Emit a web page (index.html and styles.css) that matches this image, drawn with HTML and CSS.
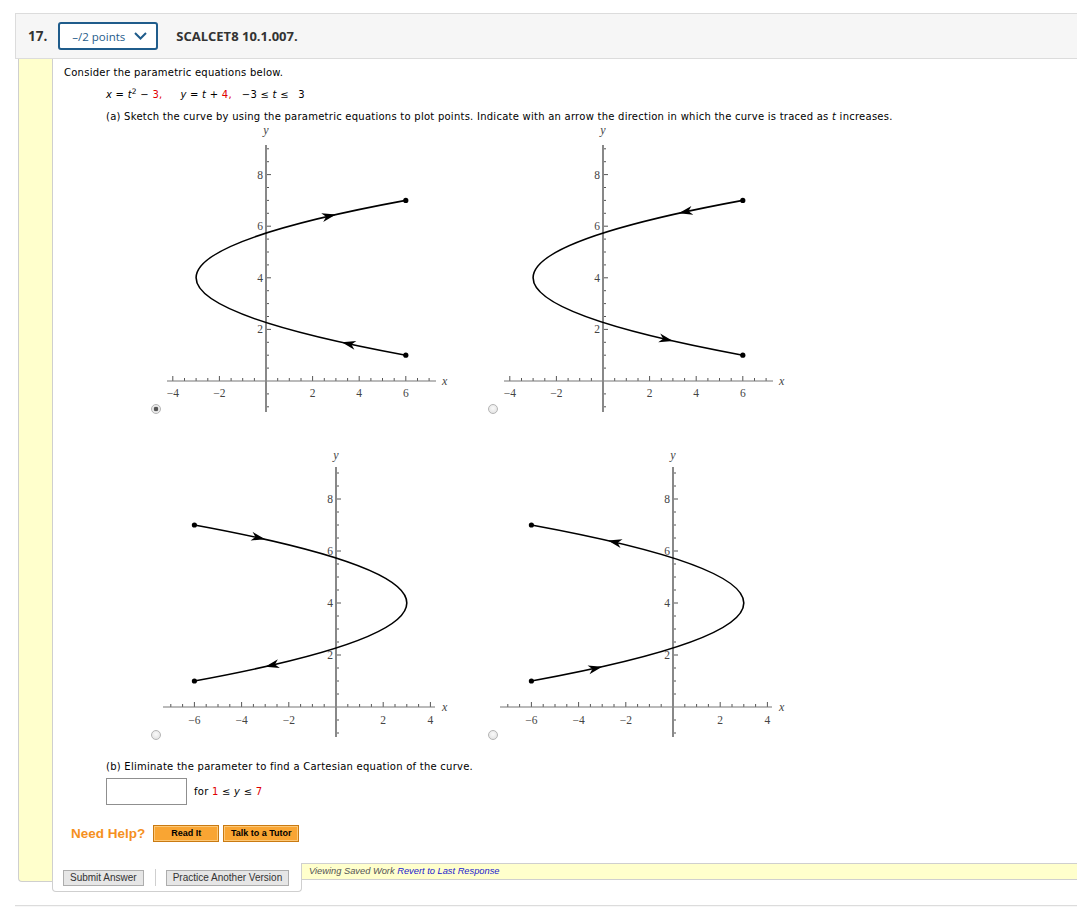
FILE: index.html
```html
<!DOCTYPE html>
<html>
<head>
<meta charset="utf-8">
<link rel="stylesheet" href="styles.css">
</head>
<body>
<div class="page">
  <div class="q">
    <div class="qhead">
      <span class="qnum">17.</span>
      <span class="pts">–/2 points <svg class="chev" width="13" height="8" viewBox="0 0 13 8"><path d="M1 1L6.5 6.5L12 1"/></svg></span>
      <span class="qtitle">SCALCET8 10.1.007.</span>
    </div>
    <div class="qbody">
      <div class="stripe"></div>
      <div class="content">
        <p class="line">Consider the parametric equations below.</p>
        <p class="line eq ind"><i>x</i> = <i>t</i><sup>2</sup> − <span class="red">3,</span><span class="sp1"></span><i>y</i> = <i>t</i> + <span class="red">4,</span><span class="sp2"></span>−3 ≤ <i>t</i> ≤ <span class="sp3"></span>3</p>
        <p class="line parta ind">(a) Sketch the curve by using the parametric equations to plot points. Indicate with an arrow the direction in which the curve is traced as <i>t</i> increases.</p>

        <div class="graphs">
          <div class="cell">
            <svg class="plot" width="300" height="279" viewBox="0 0 300 279">
              <path class="tk" d="M22.8 256v-5M69.4 256v-5M162.6 256v-5M209.2 256v-5M255.8 256v-5M34.5 256v-3M46.1 256v-3M57.8 256v-3M81.1 256v-3M92.7 256v-3M104.4 256v-3M127.7 256v-3M139.3 256v-3M151 256v-3M174.3 256v-3M185.9 256v-3M197.6 256v-3M220.9 256v-3M232.5 256v-3M244.2 256v-3M267.5 256v-3M279.1 256v-3M116 204.4h5M116 152.8h5M116 101.2h5M116 49.6h5M116 281.8h3M116 268.9h3M116 243.1h3M116 230.2h3M116 217.3h3M116 191.5h3M116 178.6h3M116 165.7h3M116 139.9h3M116 127h3M116 114.1h3M116 88.3h3M116 75.4h3M116 62.5h3M116 36.7h3M116 23.8h3"/>
              <path class="ax" d="M17 256H286"/>
              <path class="ay" d="M116 20V287"/>
              <path class="crv" d="M255.8 230.2Q-163.6 152.8 255.8 75.4"/>
              <circle class="dot" cx="255.8" cy="230.2" r="2.6"/>
              <circle class="dot" cx="255.8" cy="75.4" r="2.6"/>
              <polygon class="arr" points="0,0 -14,-4.5 -10,0 -14,4.5" transform="translate(185.9 89.6) rotate(-12.7)"/>
              <polygon class="arr" points="0,0 -14,-4.5 -10,0 -14,4.5" transform="translate(191.7 217.3) rotate(-167.5)"/>
              <g class="tl">
                <text x="22.8" y="272">−4</text><text x="69.4" y="272">−2</text><text x="162.6" y="272">2</text><text x="209.2" y="272">4</text><text x="255.8" y="272">6</text>
              </g>
              <g class="tly">
                <text x="113" y="208.4">2</text><text x="113" y="156.8">4</text><text x="113" y="105.2">6</text><text x="113" y="53.6">8</text>
              </g>
              <text class="al" x="292" y="259.5">x</text>
              <text class="al mid" x="116" y="9">y</text>
            </svg>
            <span class="radio on"></span>
          </div>
          <div class="cell">
            <svg class="plot" width="300" height="279" viewBox="0 0 300 279">
              <path class="tk" d="M22.8 256v-5M69.4 256v-5M162.6 256v-5M209.2 256v-5M255.8 256v-5M34.5 256v-3M46.1 256v-3M57.8 256v-3M81.1 256v-3M92.7 256v-3M104.4 256v-3M127.7 256v-3M139.3 256v-3M151 256v-3M174.3 256v-3M185.9 256v-3M197.6 256v-3M220.9 256v-3M232.5 256v-3M244.2 256v-3M267.5 256v-3M279.1 256v-3M116 204.4h5M116 152.8h5M116 101.2h5M116 49.6h5M116 281.8h3M116 268.9h3M116 243.1h3M116 230.2h3M116 217.3h3M116 191.5h3M116 178.6h3M116 165.7h3M116 139.9h3M116 127h3M116 114.1h3M116 88.3h3M116 75.4h3M116 62.5h3M116 36.7h3M116 23.8h3"/>
              <path class="ax" d="M17 256H286"/>
              <path class="ay" d="M116 20V287"/>
              <path class="crv" d="M255.8 230.2Q-163.6 152.8 255.8 75.4"/>
              <circle class="dot" cx="255.8" cy="230.2" r="2.6"/>
              <circle class="dot" cx="255.8" cy="75.4" r="2.6"/>
              <polygon class="arr" points="0,0 -14,-4.5 -10,0 -14,4.5" transform="translate(191.7 88.3) rotate(167.5)"/>
              <polygon class="arr" points="0,0 -14,-4.5 -10,0 -14,4.5" transform="translate(185.9 216) rotate(12.7)"/>
              <g class="tl">
                <text x="22.8" y="272">−4</text><text x="69.4" y="272">−2</text><text x="162.6" y="272">2</text><text x="209.2" y="272">4</text><text x="255.8" y="272">6</text>
              </g>
              <g class="tly">
                <text x="113" y="208.4">2</text><text x="113" y="156.8">4</text><text x="113" y="105.2">6</text><text x="113" y="53.6">8</text>
              </g>
              <text class="al" x="292" y="259.5">x</text>
              <text class="al mid" x="116" y="9">y</text>
            </svg>
            <span class="radio"></span>
          </div>
          <div class="cell">
            <svg class="plot" width="300" height="279" viewBox="0 0 300 279">
              <path class="tk" d="M44.4 256v-5M91.6 256v-5M138.8 256v-5M233.2 256v-5M280.4 256v-5M20.8 256v-3M32.6 256v-3M56.2 256v-3M68 256v-3M79.8 256v-3M103.4 256v-3M115.2 256v-3M127 256v-3M150.6 256v-3M162.4 256v-3M174.2 256v-3M197.8 256v-3M209.6 256v-3M221.4 256v-3M245 256v-3M256.8 256v-3M268.6 256v-3M186 204h5M186 152h5M186 100h5M186 48h5M186 282h3M186 269h3M186 243h3M186 230h3M186 217h3M186 191h3M186 178h3M186 165h3M186 139h3M186 126h3M186 113h3M186 87h3M186 74h3M186 61h3M186 35h3M186 22h3"/>
              <path class="ax" d="M13 256H285"/>
              <path class="ay" d="M186 16V286"/>
              <path class="crv" d="M44.4 230Q469.2 152 44.4 74"/>
              <circle class="dot" cx="44.4" cy="230" r="2.6"/>
              <circle class="dot" cx="44.4" cy="74" r="2.6"/>
              <polygon class="arr" points="0,0 -14,-4.5 -10,0 -14,4.5" transform="translate(115.2 88.3) rotate(12.7)"/>
              <polygon class="arr" points="0,0 -14,-4.5 -10,0 -14,4.5" transform="translate(115.2 215.7) rotate(167.3)"/>
              <g class="tl">
                <text x="44.4" y="273">−6</text><text x="91.6" y="273">−4</text><text x="138.8" y="273">−2</text><text x="233.2" y="273">2</text><text x="280.4" y="273">4</text>
              </g>
              <g class="tly">
                <text x="183" y="208">2</text><text x="183" y="156">4</text><text x="183" y="104">6</text><text x="183" y="52">8</text>
              </g>
              <text class="al" x="292" y="260">x</text>
              <text class="al mid" x="186" y="8">y</text>
            </svg>
            <span class="radio"></span>
          </div>
          <div class="cell">
            <svg class="plot" width="300" height="279" viewBox="0 0 300 279">
              <path class="tk" d="M44.4 256v-5M91.6 256v-5M138.8 256v-5M233.2 256v-5M280.4 256v-5M20.8 256v-3M32.6 256v-3M56.2 256v-3M68 256v-3M79.8 256v-3M103.4 256v-3M115.2 256v-3M127 256v-3M150.6 256v-3M162.4 256v-3M174.2 256v-3M197.8 256v-3M209.6 256v-3M221.4 256v-3M245 256v-3M256.8 256v-3M268.6 256v-3M186 204h5M186 152h5M186 100h5M186 48h5M186 282h3M186 269h3M186 243h3M186 230h3M186 217h3M186 191h3M186 178h3M186 165h3M186 139h3M186 126h3M186 113h3M186 87h3M186 74h3M186 61h3M186 35h3M186 22h3"/>
              <path class="ax" d="M13 256H285"/>
              <path class="ay" d="M186 16V286"/>
              <path class="crv" d="M44.4 230Q469.2 152 44.4 74"/>
              <circle class="dot" cx="44.4" cy="230" r="2.6"/>
              <circle class="dot" cx="44.4" cy="74" r="2.6"/>
              <polygon class="arr" points="0,0 -14,-4.5 -10,0 -14,4.5" transform="translate(120.9 89.6) rotate(-167.1)"/>
              <polygon class="arr" points="0,0 -14,-4.5 -10,0 -14,4.5" transform="translate(115.2 215.7) rotate(-12.7)"/>
              <g class="tl">
                <text x="44.4" y="273">−6</text><text x="91.6" y="273">−4</text><text x="138.8" y="273">−2</text><text x="233.2" y="273">2</text><text x="280.4" y="273">4</text>
              </g>
              <g class="tly">
                <text x="183" y="208">2</text><text x="183" y="156">4</text><text x="183" y="104">6</text><text x="183" y="52">8</text>
              </g>
              <text class="al" x="292" y="260">x</text>
              <text class="al mid" x="186" y="8">y</text>
            </svg>
            <span class="radio"></span>
          </div>
        </div>

        <p class="line partb ind">(b) Eliminate the parameter to find a Cartesian equation of the curve.</p>
        <div class="ansrow ind">
          <span class="ans"></span>
          <span class="for">for <span class="red">1</span> ≤ <i>y</i> ≤ <span class="red">7</span></span>
        </div>
        <div class="help">
          <span class="needhelp">Need Help?</span>
          <span class="obtn w1">Read It</span>
          <span class="obtn w2">Talk to a Tutor</span>
        </div>
      </div>
      <div class="tab">
        <span class="gbtn">Submit Answer</span>
        <span class="sep"></span>
        <span class="gbtn">Practice Another Version</span>
      </div>
      <div class="saved"><span class="sv">Viewing Saved Work</span> <span class="rev">Revert to Last Response</span></div>
    </div>
  </div>
  <div class="nextq"></div>
</div>
</body>
</html>
```

FILE: styles.css
```css
* { box-sizing: border-box; }
html, body { margin: 0; padding: 0; background: #fff; }
body {
  font-family: "DejaVu Sans", Verdana, sans-serif;
  font-size: 10px;
  color: #000;
  overflow: hidden;
}
.page { padding-top: 13px; }
.q { margin-left: 15px; }

.qhead {
  display: flex;
  align-items: center;
  height: 46px;
  background: #f6f6f6;
  border: 1px solid #dcdcdc;
  border-right: 0;
  padding-left: 12px;
  font-family: "Open Sans", sans-serif;
  color: #333;
}
.qnum { font-size: 13.5px; font-weight: 700; margin-right: 11px; }
.pts {
  display: flex;
  align-items: center;
  gap: 9px;
  width: 100px;
  height: 28px;
  border: 2px solid #1f5c8b;
  border-radius: 3px;
  padding-left: 12px;
  color: #1f5c8b;
  font-size: 11.5px;
  background: #fff;
}
.chev path { fill: none; stroke: #1f5c8b; stroke-width: 2; }
.qtitle { font-size: 13px; font-weight: 700; margin-left: 18px; }

.qbody {
  display: grid;
  grid-template-columns: 34px 250px 1fr;
  grid-template-rows: auto auto;
  margin-left: 3px;
}
.stripe {
  grid-column: 1;
  grid-row: 1 / 3;
  background: #ffffcc;
  border-left: 1px solid #cfcfcf;
  border-bottom: 1px solid #cfcfcf;
  border-bottom-left-radius: 4px;
  margin-bottom: 10px;
}
.content {
  grid-column: 2 / 4;
  grid-row: 1;
  border-left: 1px solid #cfcfcf;
  padding: 7px 0 21px 11px;
  letter-spacing: 0.25px;
}
.line { margin: 0; line-height: 14px; white-space: nowrap; }
.ind { margin-left: 42px; }
.eq { margin-top: 8px; }
.parta { margin-top: 8px; }
.red { color: #e00000; }
sup { font-size: 7.5px; line-height: 0; vertical-align: 4px; }
.sp1 { display: inline-block; width: 18px; }
.sp2 { display: inline-block; width: 10px; }
.sp3 { display: inline-block; width: 6px; }

.graphs {
  display: grid;
  grid-template-columns: 337px 337px;
  row-gap: 37px;
  margin: 1px 0 0 86px;
  letter-spacing: 0;
}
.cell { display: flex; flex-direction: column; }
.plot { display: block; overflow: visible; }
.tk { fill: none; stroke: #555; stroke-width: 1; }
.ax { fill: none; stroke: #777; stroke-width: 1.2; }
.ay { fill: none; stroke: #888; stroke-width: 2; }
.crv { fill: none; stroke: #000; stroke-width: 1.6; }
.dot { fill: #000; }
.arr { fill: #000; }
.tl text { font-family: "Liberation Serif", "DejaVu Serif", serif; font-size: 11.5px; fill: #444; text-anchor: middle; }
.tly text { font-family: "Liberation Serif", "DejaVu Serif", serif; font-size: 11.5px; fill: #444; text-anchor: end; }
.al { font-family: "Liberation Serif", serif; font-style: italic; font-size: 12px; fill: #444; }
.al.mid { text-anchor: middle; }

.radio {
  display: block;
  width: 10px;
  height: 10px;
  margin-left: 1px;
  border-radius: 50%;
  border: 1px solid #b4b4b4;
  background: radial-gradient(circle at 50% 40%, #fafafa 0, #dedede 100%);
}
.radio.on {
  background: radial-gradient(circle, #555 0 2px, #e6e6e6 2.6px, #f4f4f4 100%);
}

.partb { margin-top: 20px; }
.ansrow { display: flex; align-items: center; margin-top: 4px; }
.ans {
  display: block;
  width: 81px;
  height: 27px;
  border: 1px solid #8f8f8f;
  background: #fff;
}
.for { margin-left: 7px; }

.help {
  display: flex;
  align-items: center;
  margin: 19px 0 0 7px;
  height: 18px;
  letter-spacing: 0;
}
.needhelp {
  font-family: "Liberation Sans", Arial, sans-serif;
  font-weight: 700;
  font-size: 13.5px;
  color: #f5901e;
  margin-right: 8px;
}
.obtn {
  display: flex;
  align-items: center;
  justify-content: center;
  height: 17px;
  background: #f9a533;
  border: 1px solid #c97a12;
  box-shadow: inset 0 0 0 1px #fdc877;
  font-family: "Liberation Sans", Arial, sans-serif;
  font-weight: 700;
  font-size: 9px;
  color: #000;
}
.w1 { width: 66px; }
.w2 { width: 76px; margin-left: 4px; }

.tab {
  grid-column: 2;
  grid-row: 2;
  display: flex;
  align-items: center;
  border: 1px solid #cfcfcf;
  border-top: 0;
  border-radius: 0 0 4px 4px;
  padding: 6px 0 5px 10px;
}
.gbtn {
  display: flex;
  align-items: center;
  height: 16px;
  padding: 0 6px;
  background: #e6e6e6;
  border: 1px solid #adadad;
  font-family: "Liberation Sans", Arial, sans-serif;
  font-size: 10px;
  color: #333;
}
.sep { width: 1px; height: 17px; background: #cfcfcf; margin: 0 10px 0 11px; }

.saved {
  grid-column: 3;
  grid-row: 2;
  align-self: start;
  height: 17px;
  background: #ffffcc;
  border-top: 1px solid #cfcfcf;
  border-bottom: 1px solid #cfcfcf;
  padding-left: 7px;
  font-family: "Liberation Sans", Arial, sans-serif;
  font-style: italic;
  font-size: 9.3px;
  line-height: 15px;
  white-space: nowrap;
}
.sv { color: #555; }
.rev { color: #2222cc; }

.nextq {
  margin: 13px 0 0 15px;
  height: 10px;
  border-top: 1px solid #dcdcdc;
  background: #f7f7f7;
}
```
